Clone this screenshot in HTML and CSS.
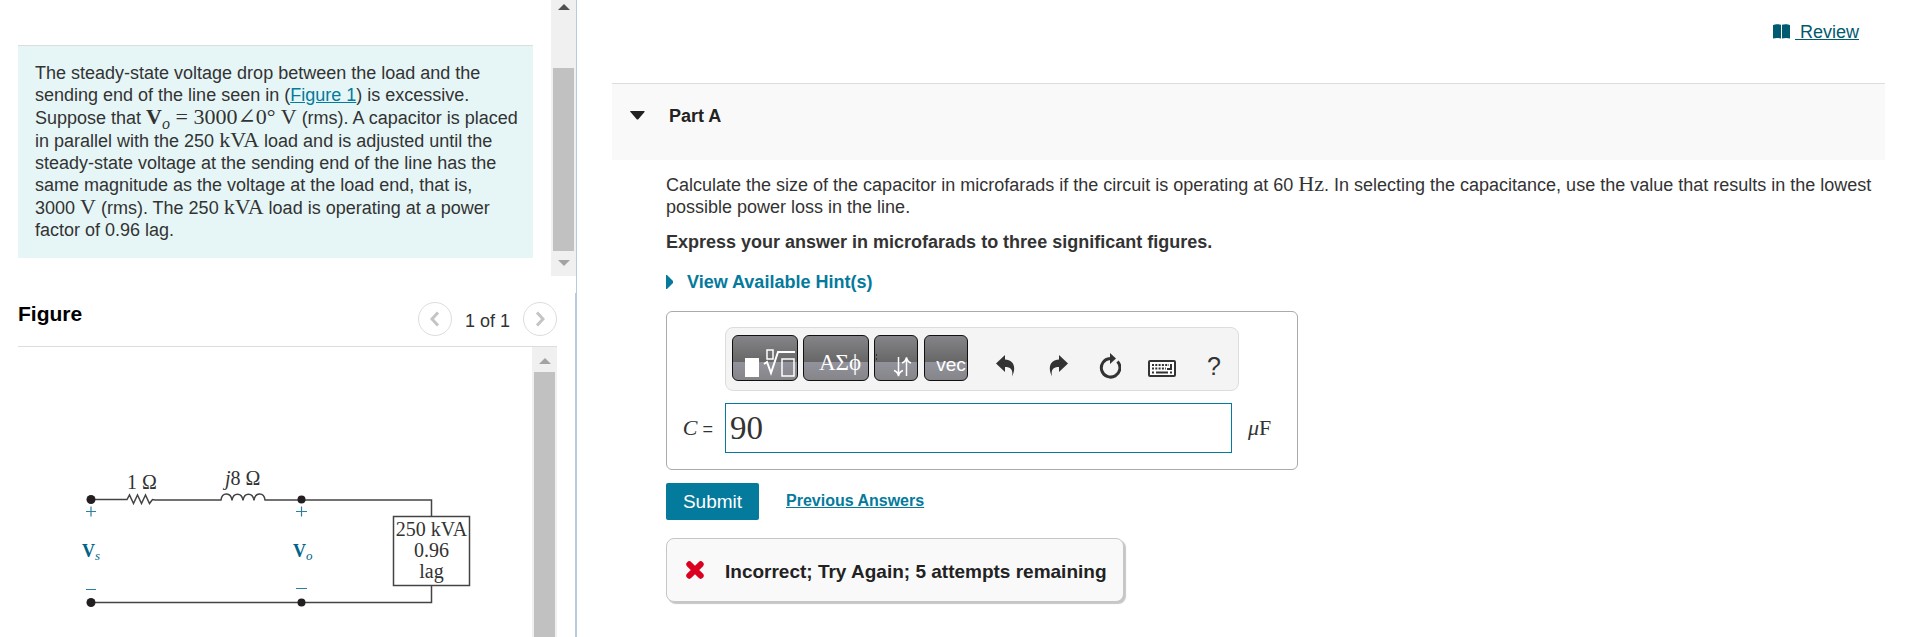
FILE: index.html
```html
<!DOCTYPE html>
<html lang="en">
<head>
<meta charset="utf-8">
<title>Part A</title>
<link rel="stylesheet" href="styles.css">
</head>
<body>
<div class="app">
  <aside class="side">
    <section class="problem-pane">
      <div class="problem-wrap">
        <p class="problem">The steady-state voltage drop between the load and the sending end of the line seen in (<a href="#figure">Figure 1</a>) is excessive. Suppose that <span class="math"><b>V</b><sub>o</sub> = 3000∠0° V</span> (rms). A capacitor is placed in parallel with the 250 <span class="math">kVA</span> load and is adjusted until the steady-state voltage at the sending end of the line has the same magnitude as the voltage at the load end, that is, <span class="quantity">3000 <span class="math">V</span></span> (rms). The 250 <span class="math">kVA</span> load is operating at a power factor of 0.96 lag.</p>
      </div>
      <div class="scrollbar" aria-hidden="true">
        <span class="arrow arrow-up arrow-dark"></span>
        <span class="thumb"></span>
        <span class="arrow arrow-down"></span>
      </div>
    </section>
    <section class="figure-pane" id="figure">
      <header class="figure-head">
        <h2>Figure</h2>
        <div class="pager">
          <button type="button" class="round" aria-label="Previous figure"><svg width="10" height="16" viewBox="0 0 10 16"><path d="M8 1.500 2 8l6 6.500"/></svg></button>
          <span>1 of 1</span>
          <button type="button" class="round" aria-label="Next figure"><svg width="10" height="16" viewBox="0 0 10 16"><path d="M2 1.500 8 8l-6 6.500"/></svg></button>
        </div>
      </header>
      <div class="figure-body">
        <div class="canvas">
          <svg class="circuit" width="410" height="150" viewBox="70 465 410 150" role="img" aria-label="Line circuit with load">
            <g class="wire">
              <path d="M91 498.500H127l2.500-4.500 4 8.500 4-8.500 4 8.500 4-8.500 4 8.500 3-4 2.500.5H221c1-8 10-8 11 .5c1-8.500 10-8.500 11 0c1-8.500 10-8.500 11 0c1-8.500 10-8.500 11-.5H431.500V515.500"/>
              <path d="M91 601.500H431.500V584.500"/>
              <rect x="393.500" y="515.500" width="76" height="69"/>
            </g>
            <g class="dots"><circle cx="91" cy="498.500" r="4.500"/><circle cx="301.500" cy="498.500" r="4"/><circle cx="91" cy="601.500" r="4.500"/><circle cx="301.500" cy="601.500" r="4"/></g>
            <path class="signs" d="M86 510.500H96M91 505.500V515.500M296 510.500H307M301.500 505.500V515.500M86 588.500H96M296 587.500H307"/>
            <g class="label">
              <text x="127" y="488">1 Ω</text>
              <text x="225" y="484"><tspan class="it">j</tspan>8 Ω</text>
              <text x="431.500" y="535" text-anchor="middle">250 kVA</text>
              <text x="431.500" y="556" text-anchor="middle">0.96</text>
              <text x="431.500" y="577" text-anchor="middle">lag</text>
            </g>
            <g class="volt">
              <text x="82" y="556">V<tspan class="small" dy="3">s</tspan></text>
              <text x="293" y="556">V<tspan class="small" dy="3">o</tspan></text>
            </g>
          </svg>
        </div>
        <div class="scrollbar" aria-hidden="true">
          <span class="arrow arrow-up"></span>
          <span class="thumb"></span>
        </div>
      </div>
    </section>
  </aside>

  <main class="main">
    <nav class="top">
      <svg width="17" height="15" viewBox="0 0 17 15" aria-hidden="true"><path fill="#005a70" d="M0 1.200C2 0 6 0 8 .8v13.700c-2-.8-6-.8-8 0zM9 .8c2-.8 6-.8 8 .4v13.300c-2-.8-6-.8-8 0z"/></svg>
      <a href="#review">&nbsp;Review</a>
    </nav>
    <header class="part">
      <svg width="15" height="9" viewBox="0 0 15 9" aria-hidden="true"><path fill="#222" d="M0 1Q0 0 1 0H14Q15 0 14.500 1L8.500 8Q7.500 9 6.500 8L.5 1z"/></svg>
      <h2>Part A</h2>
    </header>
    <div class="content">
      <p class="ask">Calculate the size of the capacitor in microfarads if the circuit is operating at 60 <span class="math">Hz</span>. In selecting the capacitance, use the value that results in the lowest possible power loss in the line.</p>
      <p class="express">Express your answer in microfarads to three significant figures.</p>
      <a class="hints" href="#hints"><svg width="7" height="14" viewBox="0 0 7 14" aria-hidden="true"><path fill="#047a9c" d="M0 0h1l6 6v2l-6 6H0z"/></svg>View Available Hint(s)</a>
      <form class="answer">
        <div class="tools">
          <button type="button" class="key wide" aria-label="Templates"><svg width="66" height="46" viewBox="0 0 66 46"><path fill="#fff" d="M13 23h14v19H13z"/><path fill="none" stroke="#fff" stroke-width="1.500" d="M35 15h6v9h-6zM50 24h12v17H50z"/><path fill="none" stroke="#fff" stroke-width="2" d="M32 29l3-2 4 11 7-21h17"/></svg></button>
          <button type="button" class="key wide greek">ΑΣϕ</button>
          <button type="button" class="key" aria-label="Scripts"><svg width="44" height="46" viewBox="0 0 44 46"><path fill="none" stroke="#fff" stroke-width="1.500" d="M24.500 22v19M20 35.500q3.500 1 4.500 5.500 1-4.500 4.500-5.500M32.500 41V22.500M28 28q3.500-1 4.500-5.500Q33.500 27 37 28"/><path fill="#333" d="M2 19h1v2H2zM2 23h1v2H2z"/></svg></button>
          <button type="button" class="key vec">vec</button>
          <button type="button" class="tool" aria-label="Undo"><svg width="20" height="22" viewBox="0 0 20 22"><path fill="#333" d="M0 8.500 9 0v4.500c8 .5 12 7 7 17C17.500 14 14 12 9 12v5z"/></svg></button>
          <button type="button" class="tool" aria-label="Redo"><svg width="20" height="22" viewBox="0 0 20 22"><path fill="#333" d="M20 8.500 11 0v4.500C3 5-1 11.500 4 21.500 2.500 14 6 12 11 12v5z"/></svg></button>
          <button type="button" class="tool" aria-label="Reset"><svg width="22" height="26" viewBox="0 0 22 26"><path fill="none" stroke="#333" stroke-width="3" d="M11 5.500A9.300 9.300 0 1 0 18.500 8.500"/><path fill="#333" d="M11 0l6 5.500-6 5.500z"/></svg></button>
          <button type="button" class="tool keyboard" aria-label="Keyboard"><svg width="28" height="18" viewBox="0 0 28 18"><rect x="1" y="1" width="26" height="15" rx="1" fill="#fff" stroke="#333" stroke-width="2"/><path fill="none" stroke="#333" stroke-width="2" stroke-dasharray="2 1.300" d="M4 5h17M4 8.500h14"/><path fill="none" stroke="#333" stroke-width="2" d="M23 4v5h-4M4 12.500h2M8 12.500h12M22 12.500h2"/></svg></button>
          <button type="button" class="tool help" aria-label="Help">?</button>
        </div>
        <label for="cap"><i>C</i> =</label>
        <input id="cap" type="text" value="90">
        <span class="unit"><i>μ</i>F</span>
      </form>
      <div class="actions">
        <button type="submit" class="submit">Submit</button>
        <a href="#previous">Previous Answers</a>
      </div>
      <div class="feedback" role="status">
        <svg width="18" height="18" viewBox="0 0 18 18" aria-hidden="true"><path fill="none" stroke="#db0020" stroke-width="6" stroke-linecap="round" d="M3.300 3.300l11.400 11.400M14.700 3.300L3.300 14.700"/></svg>
        <span>Incorrect; Try Again; 5 attempts remaining</span>
      </div>
    </div>
  </main>
</div>
</body>
</html>
```
FILE: styles.css
```css
* { box-sizing: border-box; }
body {
  margin: 0;
  font-family: "Liberation Sans", Arial, sans-serif;
  font-size: 18px;
  line-height: 22px;
  color: #333;
  background: #fff;
}
h2, p { margin: 0; }
svg { display: block; flex: none; }
a { color: #047a9c; }
button { font-family: inherit; padding: 0; cursor: pointer; }

.app { display: flex; height: 100vh; overflow: hidden; }
.side {
  flex: 0 0 577px;
  display: flex;
  flex-direction: column;
  border-right: 1px solid #b8cbdc;
}
.problem-pane { display: flex; }
.problem-wrap { flex: 1; padding: 45px 18px 18px; }
.problem {
  padding: 16px 8px 17px 17px;
  border-top: 1px solid #ddd;
  background: #e6f6f7;
}
.quantity { white-space: nowrap; }
.math {
  display: inline-block;
  font-family: "Liberation Serif", "DejaVu Serif", serif;
  font-size: 22px;
  line-height: 22px;
}
.math sub { font-size: 16px; font-style: italic; line-height: 0; }

.scrollbar {
  width: 25px;
  display: flex;
  flex-direction: column;
  align-items: center;
  background: #f0f0f0;
}
.thumb { flex: 1; width: 21px; background: #c1c1c1; }
.arrow { border: 6px solid transparent; }
.arrow-up { border-top: 0; border-bottom-color: #a3a3a3; margin: 11px 0 8px; }
.arrow-dark { border-bottom-color: #505050; margin: 4px 0 58px; }
.arrow-down { border-bottom: 0; border-top-color: #a3a3a3; margin: 9px 0 10px; }

.figure-pane {
  flex: 1;
  display: flex;
  flex-direction: column;
  margin-top: 17px;
  padding: 0 18px;
  border-right: 1px solid #b8cbdc;
}
.figure-head {
  display: flex;
  justify-content: space-between;
  padding: 9px 0 10px;
  border-bottom: 1px solid #ddd;
}
.figure-head h2 { font-size: 21px; line-height: 24px; color: #000; }
.pager { display: flex; align-items: center; gap: 13px; }
.pager span { padding-top: 4px; }
.round {
  display: grid;
  place-items: center;
  width: 34px;
  height: 34px;
  border: 1px solid #ddd;
  border-radius: 50%;
  background: #fff;
}
.round path { fill: none; stroke: #c4c4c4; stroke-width: 3; }
.figure-body { flex: 1; display: flex; justify-content: space-between; }
.canvas { padding: 119px 0 0 52px; }
.wire { fill: none; stroke: #444; stroke-width: 1.500; }
.dots { fill: #231f20; }
.signs { fill: none; stroke: #2a7fa3; stroke-width: 1.200; }
.label { font: 20px "Liberation Serif", serif; fill: #333; }
.it { font-style: italic; }
.volt { font: bold 18px "Liberation Serif", serif; fill: #00648a; }
.small { font: italic 13px "Liberation Serif", serif; }

.main { flex: 1; min-width: 0; padding: 0 33px 0 35px; }
.top {
  display: flex;
  align-items: center;
  justify-content: flex-end;
  gap: 5px;
  height: 83px;
  padding: 0 26px 20px 0;
}
.top a { color: #005a70; }
.part {
  display: flex;
  align-items: center;
  gap: 24px;
  min-height: 77px;
  padding: 0 18px 13px;
  border-top: 1px solid #ddd;
  background: #f9f9f9;
}
.part h2 { font-size: 18px; color: #222; }
.content { padding: 13px 8px 0 54px; }
.ask { margin-bottom: 13px; }
.express { font-weight: bold; margin-bottom: 18px; }
.hints {
  display: flex;
  align-items: center;
  gap: 14px;
  font-weight: bold;
  text-decoration: none;
}
.answer {
  display: grid;
  grid-template-columns: 42px 507px 50px;
  gap: 12px 16px;
  align-items: center;
  width: 632px;
  max-width: 100%;
  margin-top: 18px;
  padding: 15px 0 16px;
  border: 1px solid #aaa;
  border-radius: 6px;
}
.tools {
  grid-column: 2 / 4;
  display: flex;
  align-items: flex-start;
  width: 514px;
  height: 64px;
  padding: 7px 0 7px 6px;
  border: 1px solid #ddd;
  border-radius: 8px;
  background: #f4f4f4;
}
.key {
  flex: none;
  width: 44px;
  height: 46px;
  margin-right: 6px;
  overflow: hidden;
  border: 1px solid #111;
  border-radius: 6px;
  color: #fff;
  background: linear-gradient(#858589, #666 60%, #92929c 60%, #858589);
}
.wide { width: 66px; margin-right: 5px; }
.key svg { margin: -1px; }
.greek { padding: 10px 0 0 8px; font: 23px "Liberation Serif", serif; }
.vec { padding: 14px 0 0 10px; font-size: 19px; }
.tool {
  display: grid;
  flex: none;
  place-items: center;
  width: 52px;
  height: 46px;
  padding-top: 16px;
  border: 0;
  color: #333;
  background: none;
}
.keyboard { padding-top: 22px; }
.help { font-size: 25px; }
.vec + .tool { margin-left: 6px; }
.answer label { text-align: right; white-space: nowrap; padding-right: 2px; }
.answer label i, .unit { font-family: "Liberation Serif", serif; font-size: 22px; }
.answer label { margin-right: -6px; }
.answer input {
  width: 100%;
  height: 50px;
  padding: 0 4px;
  border: 1px solid #047a9c;
  font: 33px "Liberation Serif", serif;
  color: #333;
}
.actions { display: flex; align-items: center; gap: 27px; margin-top: 13px; }
.submit {
  width: 93px;
  height: 37px;
  border: 0;
  border-radius: 2px;
  font-size: 19px;
  color: #fff;
  background: #047a9c;
}
.actions a { font-size: 16px; font-weight: bold; padding-bottom: 2px; }
.feedback {
  display: inline-flex;
  align-items: center;
  gap: 21px;
  height: 64px;
  margin-top: 18px;
  padding: 0 16px 0 19px;
  border: 1px solid #c6c6c6;
  border-radius: 8px;
  box-shadow: 2px 2px 1px #c6c6c6;
  background: #f9f9f9;
  font-size: 19px;
  font-weight: bold;
  color: #222;
}
.feedback span { padding-top: 3px; }
```
